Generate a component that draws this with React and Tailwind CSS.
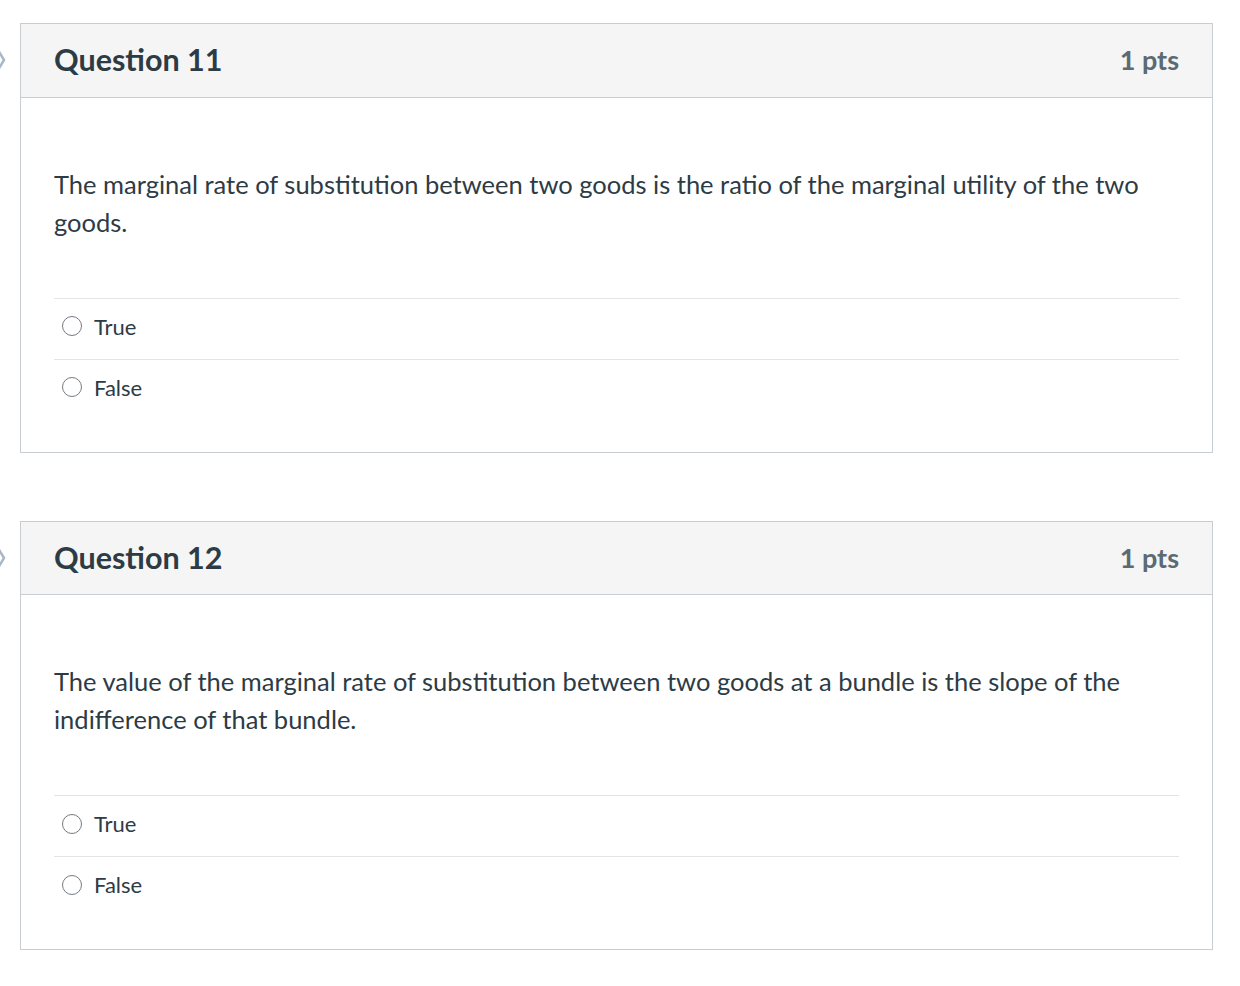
import React from "react";

const questions = [
  {
    id: 11,
    points: 1,
    text: "The marginal rate of substitution between two goods is the ratio of the marginal utility of the two goods.",
    answers: ["True", "False"],
  },
  {
    id: 12,
    points: 1,
    text: "The value of the marginal rate of substitution between two goods at a bundle is the slope of the indifference of that bundle.",
    answers: ["True", "False"],
  },
];

function FlagMarker() {
  return (
    <svg
      width="10"
      height="26"
      viewBox="0 0 10 26"
      className="absolute left-[-3px] top-[24px]"
    >
      <path d="M1 3 L7 13 L1 23" fill="none" stroke="#a9b7c6" strokeWidth="2.5" strokeLinejoin="round" />
    </svg>
  );
}

function Question({ q }) {
  return (
    <div className="relative">
      <FlagMarker />
      <div className="ml-5 w-[1193px] border border-[#c7cdd1] bg-white">
        <div className="flex h-[73.5px] items-center justify-between border-b border-[#c7cdd1] bg-[#f5f5f5] px-[33px]">
          <h2 className="text-[30.5px] font-bold text-[#2d3b45]">Question {q.id}</h2>
          <span className="text-[27px] font-bold text-[#5b6a73]">{q.points} pts</span>
        </div>
        <div className="px-[33px] pb-[32px] pt-[67px]">
          <p className="text-[25.5px] leading-[38px] text-[#2d3b45]">{q.text}</p>
          <div className="mt-[57px]">
            {q.answers.map((a) => (
              <label
                key={a}
                className="flex h-[61px] items-center gap-[12px] border-t border-[#e2e5e8] pb-[5px] pl-[8px] text-[22px] text-[#2d3b45]"
              >
                <span className="h-[20px] w-[20px] rounded-full border-[1.5px] border-[#737b82] bg-white" />
                {a}
              </label>
            ))}
          </div>
        </div>
      </div>
    </div>
  );
}

export default function App() {
  return (
    <div className="min-h-screen bg-white pt-[23px] font-['Lato','Liberation_Sans',sans-serif]">
      <div className="flex flex-col gap-[68px]">
        {questions.map((q) => (
          <Question key={q.id} q={q} />
        ))}
      </div>
    </div>
  );
}
